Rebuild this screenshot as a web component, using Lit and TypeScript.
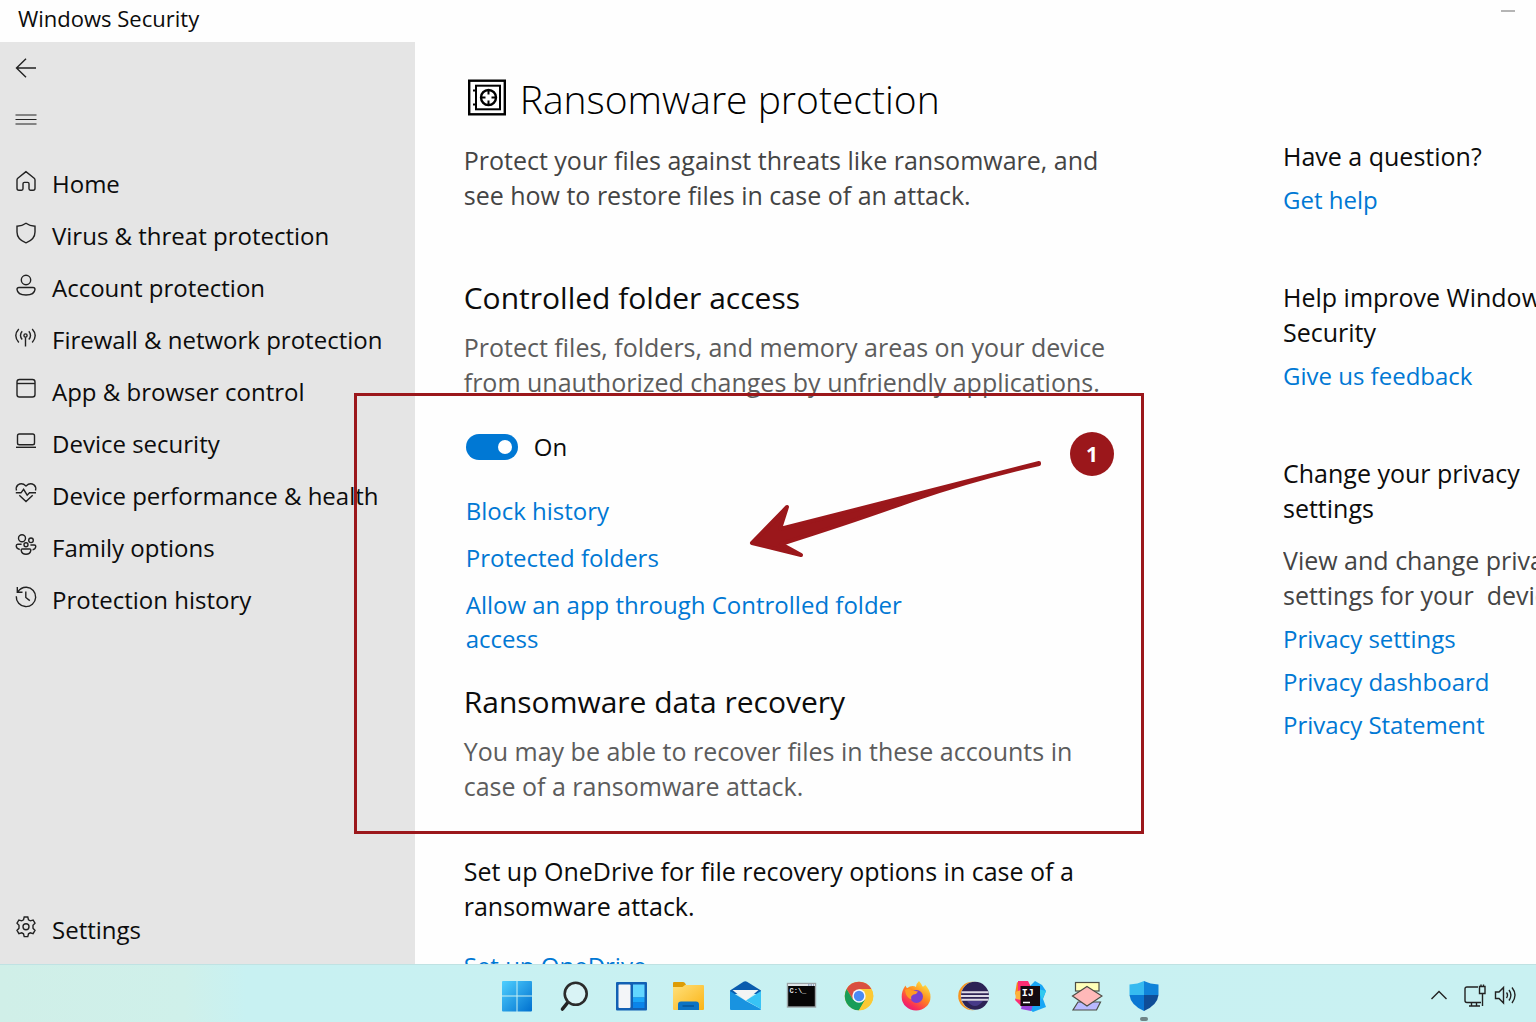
import { LitElement, html, css, svg, nothing } from "lit";
import type { SVGTemplateResult } from "lit";
import { customElement, state } from "lit/decorators.js";
import { classMap } from "lit/directives/class-map.js";

interface NavEntry {
  label: string;
  icon: SVGTemplateResult;
}

interface TaskEntry {
  label: string;
  icon: SVGTemplateResult;
  active?: boolean;
}

const NAV: NavEntry[] = [
  {
    label: "Home",
    icon: svg`<path d="M12 2.6 3.8 9.2Q3 9.9 3 11V19.3Q3 21.2 4.9 21.2H7.6Q9 21.2 9 19.8V14.8Q9 13.4 10.4 13.4H13.6Q15 13.4 15 14.8V19.8Q15 21.2 16.4 21.2H19.1Q21 21.2 21 19.3V11Q21 9.9 20.2 9.2Z"/>`,
  },
  {
    label: "Virus & threat protection",
    icon: svg`<path d="M12 2.3Q15.5 5 21 5.2V11Q21 18.5 12 21.8Q3 18.5 3 11V5.2Q8.500 5 12 2.300Z"/>`,
  },
  {
    label: "Account protection",
    icon: svg`<circle cx="12" cy="7" r="4.700"/><path d="M5 14.500H19Q21 14.500 21 16.400Q20.500 22 12 22Q3.500 22 3 16.400Q3 14.500 5 14.500Z"/>`,
  },
  {
    label: "Firewall & network protection",
    icon: svg`<circle cx="11.500" cy="10.500" r="1.600"/><path d="M11.500 12.200V21.500M8.200 14.500Q4.800 10.500 8.200 6.300M14.800 14.500Q18.200 10.500 14.800 6.300M4.800 17.500Q-1.200 10.500 4.800 4M18.200 17.500Q24.200 10.500 18.200 4"/>`,
  },
  {
    label: "App & browser control",
    icon: svg`<rect x="3" y="2.500" width="18" height="17.500" rx="2.500"/><path d="M3 6.500H21"/>`,
  },
  {
    label: "Device security",
    icon: svg`<rect x="3.500" y="5" width="17" height="10.800" rx="1.800"/><path d="M2 18.300H22"/>`,
  },
  {
    label: "Device performance & health",
    icon: svg`<path d="M2.500 9.500Q1.500 6 4 3.900Q8 1.200 12 5Q16 1.200 20 3.900Q22.500 6 21.500 9.500M1.800 11.800H7L9.600 8.300L13.200 14.200L15.500 11.800H22M5.300 14.300L12 20.500L18.700 14.300"/>`,
  },
  {
    label: "Family options",
    icon: svg`<circle cx="8" cy="5.300" r="3.500"/><circle cx="17" cy="7.300" r="2.300"/><circle cx="12" cy="11.800" r="2"/><path d="M7.600 11.200H3.800Q2.200 11.200 2.200 13Q2.400 15.700 5.800 16.500M16.400 12H20.300Q21.800 12 21.800 13.500Q21.400 16.500 18.600 16.700M8.300 16H15.700Q17 16 16.800 17.500Q16 21.300 12 21.300Q8 21.300 7.200 17.500Q7 16 8.300 16Z"/>`,
  },
  {
    label: "Protection history",
    icon: svg`<path d="M3.300 2V7.200H8.500M3.600 7Q7 2 12.500 2.200A9.700 9.700 0 1 1 2.300 11.200M11.800 6.500V12.500L15.800 15.600"/>`,
  },
];

const SETTINGS_ICON = svg`<circle cx="12" cy="11.800" r="3"/><path d="M10.200 2H13.800L14.500 4.800L16.300 5.800L19.100 5L21 8.200L19 10.300V13.300L21 15.400L19.100 18.600L16.300 17.800L14.500 18.800L13.800 21.600H10.200L9.500 18.800L7.700 17.800L4.900 18.600L3 15.400L5 13.300V10.300L3 8.200L4.900 5L7.700 5.800L9.500 4.800Z"/>`;

const TASKS: TaskEntry[] = [
  {
    label: "Start",
    icon: svg`<defs><linearGradient id="win" x1="0" y1="0" x2="1" y2="1"><stop offset="0" stop-color="#4fd0ff"/><stop offset="1" stop-color="#0070cf"/></linearGradient></defs>
      <path fill="url(#win)" d="M2 1H15.500V15.500H1V2Q1 1 2 1ZM16.500 1H30Q31 1 31 2V15.500H16.500ZM1 16.500H15.500V31.500H2Q1 31.500 1 30.500ZM16.500 16.500H31V30.500Q31 31.500 30 31.500H16.500Z"/>`,
  },
  {
    label: "Search",
    icon: svg`<path d="M10.500 21.500 4.500 29" stroke="#222" stroke-width="3.600" stroke-linecap="round"/><circle cx="17.700" cy="13.800" r="11" fill="#d9f3f5" stroke="#2b2b2b" stroke-width="2.600"/>`,
  },
  {
    label: "Widgets",
    icon: svg`<rect x="1" y="2" width="31" height="28.500" rx="1" fill="#1160b4"/><rect x="3.500" y="4.500" width="12" height="23.500" rx="1" fill="#f3f5f8"/><rect x="18" y="4.500" width="11.500" height="13" fill="#62d6ff"/><rect x="18" y="17.500" width="11.500" height="5" fill="#19a5f8"/><rect x="18" y="22.500" width="11.500" height="5.500" fill="#0a84ea"/>`,
  },
  {
    label: "File Explorer",
    icon: svg`<defs><linearGradient id="fold" x1="0" y1="0" x2="1" y2="1"><stop offset="0" stop-color="#ffe07a"/><stop offset="1" stop-color="#fbb416"/></linearGradient></defs>
      <path fill="#dd9c06" d="M1 3Q1 2 2 2H11Q12 2 13 3L14 5V9H1Z"/><path fill="url(#fold)" d="M1 7H10.500L13 5H31Q32 5 32 6V29Q32 30 31 30H2Q1 30 1 29Z"/><path fill="#0b73c4" d="M6 30V24.500Q6 21.500 9 21.500H24Q27 21.500 27 24.500V30Z"/><path d="M10.500 26H22" stroke="#06508f" stroke-width="1.300"/>`,
  },
  {
    label: "Mail",
    icon: svg`<path fill="#0a5cae" d="M1 10.500 14.500 1.700Q16.300.700 18 1.700L32 10.500V14H1Z"/><path fill="#f4f4f4" d="M3.500 10H29.500L17 21Z"/><path fill="#1993e0" d="M1 11 17 21 32 29Q32 30 31 30H2Q1 30 1 29Z"/><path fill="#38c3f5" d="M17 20.500 32 11V29Z"/>`,
  },
  {
    label: "Command Prompt",
    icon: svg`<rect x="1.500" y="3.500" width="28" height="23.500" fill="#060606" stroke="#9ba3a6" stroke-width="1.400"/><path d="M2 5H29" stroke="#dfe5e8" stroke-width="2"/><path d="M22 5H28" stroke="#5573a6" stroke-width="1.200" stroke-dasharray="1.500 1"/><text x="3.500" y="13" font-size="7" font-weight="700" font-family="Liberation Mono, monospace" fill="#e8e8e8">C:\\_</text>`,
  },
  {
    label: "Google Chrome",
    icon: svg`<circle cx="16" cy="16" r="14.300" fill="#fcc934"/><path fill="#d94f41" d="M3.600 8.900A14.300 14.300 0 0 1 28.400 8.900H16L9.900 19.500Z"/><path fill="#189d58" d="M3.600 8.900A14.300 14.300 0 0 0 16 30.300L22.200 19.500 9.900 19.500Z"/><path fill="#fcc934" d="M28.400 8.900A14.300 14.300 0 0 1 16 30.300L22.200 19.500V8.900Z"/><circle cx="16" cy="16" r="6.700" fill="#f5f7fb"/><circle cx="16" cy="16" r="5.200" fill="#4a8af4"/>`,
  },
  {
    label: "Firefox",
    icon: svg`<defs><linearGradient id="fox" x1=".85" y1="0" x2=".2" y2="1"><stop offset="0" stop-color="#fff04a"/><stop offset=".45" stop-color="#ff8a1e"/><stop offset=".8" stop-color="#fa2f56"/><stop offset="1" stop-color="#e01585"/></linearGradient></defs>
      <path fill="url(#fox)" d="M19 1Q21.500 4 22.500 6.500Q24.500 7 25 4.800Q30.500 10 30.500 17A14.400 13.600 0 0 1 1.700 17Q1.400 11 5.500 5.500Q6.200 8 7.500 8Q9.500 6 12.500 6Q15 6 16 7Q16.500 3 19 1Z"/><circle cx="16.500" cy="16.500" r="6.500" fill="#7a3fd0"/><path fill="#ff9b24" d="M5 10Q9 8 12 10.500L18 11.500Q17 14 13.500 14.500Q10 16 11.500 19.500Q6 18 5 10Z"/>`,
  },
  {
    label: "Eclipse",
    icon: svg`<circle cx="15.500" cy="16" r="14.300" fill="#f7941e"/><circle cx="18" cy="16" r="14.200" fill="#cdf1f2"/><circle cx="18" cy="15.800" r="14" fill="#2c2255"/><path fill="#473a88" d="M10 21H26Q18 31 10 21Z"/><path d="M4.500 12.300H31.500M4 16H32M4.500 19.700H31.500" stroke="#dedbe8" stroke-width="2"/>`,
  },
  {
    label: "IntelliJ IDEA",
    icon: svg`<path fill="#fc801d" d="M3 2 8 5 6 17 1 14Z"/><path fill="#fd2d72" d="M4 1H14L17 7V28L8 27 1 20 4 12Z"/><path fill="#fcb23c" d="M1 12 7 10V20L2 19Z"/><path fill="#19a6f5" d="M15 7 21 1 28 5 32 11 29 19 32 27 19 32 12 27Z"/><path fill="#9a46dc" d="M8 25H19L17 31 7 29Z"/><path fill="#30c9ef" d="M24 9 32 11 28 20Z"/><rect x="6.500" y="6" width="19.500" height="20" fill="#140a10"/><text x="7.800" y="16" font-size="10" font-weight="700" font-family="Liberation Mono, monospace" fill="#fff">IJ</text><path d="M9 22.500H16" stroke="#fff" stroke-width="1.500"/>`,
  },
  {
    label: "Diagram editor",
    icon: svg`<g stroke="#4d4d45" stroke-width="1.200"><rect x="4.500" y="2.500" width="23.500" height="8.500" fill="#ffffb8"/><path fill="#b9b9ff" d="M7 22H29.500L25.500 30H2Z"/><path fill="#ffb9b9" d="M16 6.500 31 16 16 26 1.500 16Z"/></g>`,
  },
  {
    label: "Windows Security",
    active: true,
    icon: svg`<path fill="#36baf0" d="M16 1V15H1.500V4.500Q10 4 16 1Z"/><path fill="#1083d9" d="M16 1Q22 4 30.500 4.500V15H16Z"/><path fill="#0a77d3" d="M1.500 15H16V31Q2.500 25 1.500 15Z"/><path fill="#0f4d97" d="M16 15H30.500Q29.500 25 16 31Z"/>`,
  },
];

@customElement("app-root")
export class AppRoot extends LitElement {
  @state() private enabled = true;

  static styles = css`
    :host {
      --accent: #0078d4;
      --mark: #9b171b;
      display: block;
      position: relative;
      height: 100vh;
      overflow: hidden;
      background: #fefefe;
      color: #0c0c0c;
      font-family: "Open Sans", "Noto Sans", sans-serif;
      font-size: 24px;
      line-height: 35px;
    }
    * {
      box-sizing: border-box;
    }
    h1, h2, h3, p, ul {
      margin: 0;
      padding: 0;
      font-weight: 400;
    }
    p, h3 {
      font-size: 25px;
    }
    ul {
      list-style: none;
    }
    button {
      border: 0;
      padding: 0;
      background: none;
      color: inherit;
      font: inherit;
      display: flex;
    }
    a {
      color: var(--accent);
      text-decoration: none;
    }
    svg {
      display: block;
      flex: none;
    }
    .shell {
      display: flex;
      flex-direction: column;
      height: 100%;
    }
    .titlebar {
      flex: none;
      display: flex;
      justify-content: space-between;
      align-items: flex-start;
      height: 42px;
      padding: 0 21px 0 18px;
      font-size: 22px;
      line-height: 36px;
    }
    .minimize {
      padding: 10px 0;
    }
    .body {
      flex: 1;
      min-height: 0;
      display: flex;
    }
    .sidebar {
      flex: 0 0 27%;
      display: flex;
      flex-direction: column;
      background: #e5e5e5;
      padding-bottom: 9px;
    }
    .tool,
    .nav-link {
      height: 52px;
      padding-left: 14px;
      display: flex;
      align-items: center;
      gap: 14px;
      color: inherit;
      white-space: nowrap;
    }
    .nav-link svg {
      margin-bottom: 4px;
    }
    .nav {
      flex: 1;
      padding-top: 11px;
    }
    .line {
      fill: none;
      stroke: #222;
      stroke-width: 1.4;
    }
    .content {
      flex: 1;
      min-width: 0;
      overflow: hidden;
      padding: 29px 24px 0 49px;
    }
    .column {
      max-width: 650px;
    }
    .heading {
      display: flex;
      align-items: center;
      gap: 13px;
      padding-left: 3px;
      margin-bottom: 16px;
    }
    h1 {
      font-size: 39px;
      font-weight: 300;
      line-height: 56px;
      white-space: nowrap;
      color: #000;
    }
    h2 {
      font-size: 30px;
      line-height: 40px;
      margin-bottom: 12px;
    }
    .lead {
      color: #444;
      margin-bottom: 65px;
    }
    .muted {
      color: #5c5c5c;
    }
    .switch {
      display: flex;
      align-items: center;
      gap: 16px;
      padding-left: 2px;
      margin: 29px 0 30px;
    }
    .toggle {
      appearance: none;
      display: flex;
      align-items: center;
      width: 52px;
      height: 26px;
      margin: 0;
      padding: 0 6px;
      border-radius: 13px;
      background: #777;
    }
    .toggle::before {
      content: "";
      width: 14px;
      height: 14px;
      border-radius: 50%;
      background: #fff;
    }
    .toggle:checked {
      justify-content: flex-end;
      background: var(--accent);
    }
    .links {
      display: flex;
      flex-direction: column;
      gap: 13px;
      max-width: 460px;
      line-height: 34px;
      padding-left: 2px;
      margin-bottom: 26px;
    }
    .onedrive {
      margin: 50px 0 24px;
    }
    .aside {
      flex: 0 0 253px;
      overflow: hidden;
      padding-top: 97px;
    }
    .aside-inner {
      width: 310px;
      display: flex;
      flex-direction: column;
      gap: 63px;
    }
    .group {
      display: flex;
      flex-direction: column;
      gap: 9px;
    }
    .group a {
      line-height: 34px;
    }
    .note {
      color: #444;
      padding-top: 8px;
    }
    .taskbar {
      flex: none;
      display: flex;
      height: 58px;
      padding: 0 18px 0 32.6%;
      border-top: 1px solid #bfe2e3;
      background: linear-gradient(90deg, #d0efe8 0, #cff0ea 12%, #c8f1f2 16%, #c9f1f2 100%);
    }
    .tasks {
      display: flex;
      gap: 25px;
      padding-top: 15px;
    }
    .task {
      display: flex;
      flex-direction: column;
      align-items: center;
      gap: 5px;
    }
    .task.active::after {
      content: "";
      width: 8px;
      height: 4px;
      border-radius: 2px;
      background: #6f8587;
    }
    .tray {
      display: flex;
      gap: 8px;
      margin-left: auto;
      padding-top: 18px;
      height: 42px;
    }
    .overflow {
      margin-right: 8px;
    }
    .frame {
      position: absolute;
      left: 354px;
      top: 393px;
      width: 790px;
      height: 441px;
      border: 3px solid var(--mark);
      pointer-events: none;
    }
    .arrow {
      position: absolute;
      left: 390px;
      top: 62px;
      fill: var(--mark);
      stroke: var(--mark);
      stroke-width: 4;
      stroke-linejoin: round;
    }
    .badge {
      position: absolute;
      right: 27px;
      top: 36px;
      width: 44px;
      height: 44px;
      border-radius: 50%;
      background: var(--mark);
      color: #fff;
      font-size: 21px;
      font-weight: 700;
      line-height: 44px;
      text-align: center;
    }
  `;

  private lineIcon(icon: SVGTemplateResult) {
    return html`<svg class="line" width="24" height="24" viewBox="0 0 24 24" aria-hidden="true">${icon}</svg>`;
  }

  private navLink(item: NavEntry) {
    return html`<a class="nav-link" href="#">${this.lineIcon(item.icon)}<span>${item.label}</span></a>`;
  }

  private toggle(event: Event) {
    this.enabled = (event.target as HTMLInputElement).checked;
  }

  private sidebar() {
    return html`
      <aside class="sidebar">
        <button class="tool" aria-label="Back">
          ${this.lineIcon(svg`<path d="M22 12H2.500M12 2.800 2.500 12 12 21.200"/>`)}
        </button>
        <button class="tool" aria-label="Open navigation">
          ${this.lineIcon(svg`<path stroke-width="1.100" d="M1.500 7H22.500M1.500 11.500H22.500M1.500 16H22.500"/>`)}
        </button>
        <nav class="nav">
          <ul>${NAV.map((item) => html`<li>${this.navLink(item)}</li>`)}</ul>
        </nav>
        ${this.navLink({ label: "Settings", icon: SETTINGS_ICON })}
      </aside>
    `;
  }

  private content() {
    return html`
      <main class="content">
        <div class="column">
          <div class="heading">
            <svg width="40" height="40" viewBox="0 0 40 40" fill="none" stroke="#000" stroke-width="2.400" aria-hidden="true">
              <rect x="2.200" y="1.700" width="35.600" height="33.600" />
              <rect x="9" y="6.700" width="24" height="23.600" stroke-width="2" />
              <circle cx="21.500" cy="18.500" r="7.500" />
              <path d="M21.500 11V15.500M21.500 21.500V26M14 18.500H18.500M24.500 18.500H29M6 11.500H9M6 25.500H9" stroke-width="2" />
            </svg>
            <h1>Ransomware protection</h1>
          </div>
          <p class="lead">
            Protect your files against threats like ransomware, and see how to restore files in case of an attack.
          </p>
          <h2>Controlled folder access</h2>
          <p class="muted">
            Protect files, folders, and memory areas on your device from unauthorized changes by unfriendly applications.
          </p>
          <div class="switch">
            <input class="toggle" id="cfa" type="checkbox" role="switch" .checked=${this.enabled} @change=${this.toggle} />
            <label for="cfa">${this.enabled ? "On" : "Off"}</label>
          </div>
          <div class="links">
            <a href="#">Block history</a>
            <a href="#">Protected folders</a>
            <a href="#">Allow an app through Controlled folder access</a>
          </div>
          <h2>Ransomware data recovery</h2>
          <p class="muted">You may be able to recover files in these accounts in case of a ransomware attack.</p>
          <p class="onedrive">Set up OneDrive for file recovery options in case of a ransomware attack.</p>
          <a href="#">Set up OneDrive</a>
        </div>
      </main>
    `;
  }

  private help() {
    return html`
      <aside class="aside">
        <div class="aside-inner">
          <section class="group">
            <h3>Have a question?</h3>
            <a href="#">Get help</a>
          </section>
          <section class="group">
            <h3>Help improve Windows Security</h3>
            <a href="#">Give us feedback</a>
          </section>
          <section class="group">
            <h3>Change your privacy settings</h3>
            <p class="note">View and change privacy settings for your&nbsp; device</p>
            <a href="#">Privacy settings</a>
            <a href="#">Privacy dashboard</a>
            <a href="#">Privacy Statement</a>
          </section>
        </div>
      </aside>
    `;
  }

  private taskbar() {
    return html`
      <footer class="taskbar">
        <div class="tasks">
          ${TASKS.map(
            (task) => html`<button
              class=${classMap({ task: true, active: !!task.active })}
              aria-label=${task.label}
              aria-current=${task.active ? "true" : nothing}
            ><svg width="32" height="32" viewBox="0 0 32 32" aria-hidden="true">${task.icon}</svg></button>`
          )}
        </div>
        <div class="tray">
          <button class="overflow" aria-label="Show hidden icons">
            <svg class="line" width="18" height="24" viewBox="0 0 18 24"><path d="M1.500 16 9 8.500 16.500 16" /></svg>
          </button>
          <button aria-label="Network">
            <svg class="line" width="22" height="24" viewBox="0 0 22 24">
              <path d="M14 4H3Q1 4 1 6V17.500Q1 19.500 3 19.500H17M7.500 19.500V23M12.500 19.500V23M5 23H16M18.500 11V23M15.500 3.500H21V10.500H15.500ZM17 1.500V3.500M19.500 1.500V3.500" />
            </svg>
          </button>
          <button aria-label="Volume">
            <svg class="line" width="24" height="24" viewBox="0 0 24 24">
              <path d="M1.500 9H5L9.500 4.500V20L5 15.500H1.500ZM12.500 9.500Q14.500 12 12.500 15M15 7Q18.800 12 15 17.500M18 4.500Q24 12 18 20" />
            </svg>
          </button>
        </div>
      </footer>
    `;
  }

  render() {
    return html`
      <div class="shell">
        <header class="titlebar">
          <span>Windows Security</span>
          <button class="minimize" aria-label="Minimize">
            <svg width="14" height="2"><path d="M0 1H14" stroke="#b5b5b5" stroke-width="2" /></svg>
          </button>
        </header>
        <div class="body">${this.sidebar()} ${this.content()} ${this.help()}</div>
        ${this.taskbar()}
      </div>
      <div class="frame">
        <svg class="arrow" width="300" height="110" viewBox="0 0 300 110" aria-hidden="true">
          <path d="M292 5 33 71 40 49 5 85 54 97 34 86Q110 62 165 42Q230 20 292 6Z" />
        </svg>
        <span class="badge">1</span>
      </div>
    `;
  }
}
